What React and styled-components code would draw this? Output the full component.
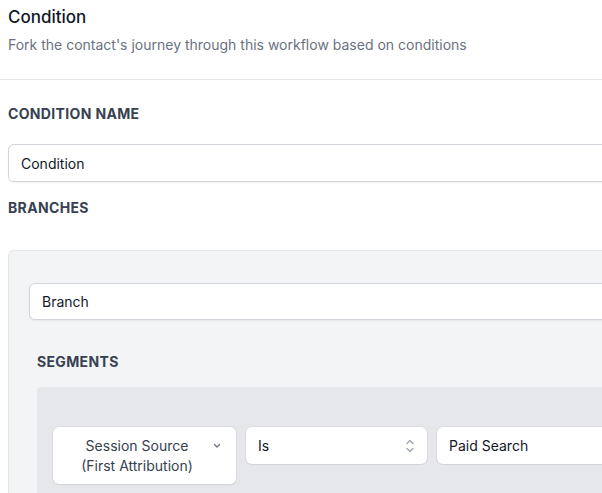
import React from 'react';
import styled, { createGlobalStyle } from 'styled-components';

const GlobalStyle = createGlobalStyle`
  html, body {
    margin: 0;
    padding: 0;
    background: #ffffff;
    overflow: hidden;
  }
  body {
    font-family: Inter, "Noto Sans", "Liberation Sans", sans-serif;
    color: #111827;
    -webkit-font-smoothing: antialiased;
  }
`;

const Page = styled.div`
  width: 760px;
`;

const Header = styled.header`
  padding: 4px 8px 24px;
  border-bottom: 1px solid #e5e7eb;
`;

const Title = styled.h2`
  margin: 0;
  font-size: 17px;
  line-height: 26px;
  font-weight: 500;
  color: #111827;
`;

const Subtitle = styled.p`
  margin: 5px 0 0;
  font-size: 14px;
  line-height: 20px;
  color: #6b7280;
`;

const Body = styled.div`
  padding: 24px 8px 0;
`;

const Label = styled.div`
  font-size: 14px;
  line-height: 20px;
  font-weight: 700;
  letter-spacing: 0.025em;
  color: #374151;
  text-transform: uppercase;
  margin-bottom: ${(p) => p.gap ?? 20}px;
`;

const TextInput = styled.input`
  display: block;
  box-sizing: border-box;
  width: 100%;
  height: ${(p) => p.h || 38}px;
  padding: 0 12px;
  border: 1px solid #d1d5db;
  border-radius: 6px;
  background: #ffffff;
  box-shadow: 0 1px 2px rgba(0, 0, 0, 0.05);
  font: inherit;
  font-size: 14px;
  color: #111827;
  outline: none;
`;

const Field = styled.div`
  margin-bottom: 16px;
`;

const Panel = styled.section`
  margin-top: 32px;
  padding: 32px 20px 0;
  background: #f3f4f6;
  border: 1px solid #e5e7eb;
  border-radius: 6px;
  height: 300px;
`;

const Segments = styled.div`
  padding: 32px 8px 0;
`;

const SegmentBox = styled.div`
  background: #e5e7eb;
  border-radius: 4px;
  padding: 40px 16px 16px;
  height: 200px;
`;

const Row = styled.div`
  display: flex;
  align-items: flex-start;
  gap: 10px;
`;

const Select = styled.div`
  box-sizing: border-box;
  flex: 0 0 ${(p) => p.w}px;
  display: flex;
  align-items: center;
  gap: 8px;
  min-height: 37px;
  padding: ${(p) => (p.tall ? '9px 15px 8px 16px' : '0 12px')};
  background: #ffffff;
  border-radius: 6px;
  box-shadow: 0 0 0 1px rgba(0, 0, 0, 0.04), 0 1px 2px rgba(0, 0, 0, 0.05);
  font-size: 14px;
  line-height: 20px;
  color: #111827;
`;

const SelectText = styled.span`
  flex: 1;
  text-align: ${(p) => (p.center ? 'center' : 'left')};
  color: ${(p) => (p.center ? '#374151' : '#111827')};
`;

const Caret = styled.svg`
  flex: 0 0 auto;
  align-self: ${(p) => (p.top ? 'flex-start' : 'center')};
  margin-top: ${(p) => (p.top ? '7px' : '0')};
  color: ${(p) => p.tone || '#6b7280'};
`;

function ChevronDown() {
  return (
    <Caret top width="8" height="6" viewBox="0 0 8 6" fill="none">
      <path d="M1.5 1.5L4 4L6.5 1.5" stroke="currentColor" strokeWidth="1.3" strokeLinecap="round" strokeLinejoin="round" />
    </Caret>
  );
}

function ChevronUpDown() {
  return (
    <Caret tone="#9ca3af" width="10" height="16" viewBox="0 0 10 16" fill="none">
      <path d="M2 5.5L5 2.5L8 5.5" stroke="currentColor" strokeWidth="1.3" strokeLinecap="round" strokeLinejoin="round" />
      <path d="M2 10.5L5 13.5L8 10.5" stroke="currentColor" strokeWidth="1.3" strokeLinecap="round" strokeLinejoin="round" />
    </Caret>
  );
}

export default function App() {
  return (
    <Page>
      <GlobalStyle />
      <Header>
        <Title>Condition</Title>
        <Subtitle>Fork the contact's journey through this workflow based on conditions</Subtitle>
      </Header>
      <Body>
        <Label>Condition Name</Label>
        <Field>
          <TextInput defaultValue="Condition" />
        </Field>
        <Label gap={0}>Branches</Label>
        <Panel>
          <TextInput h={37} defaultValue="Branch" />
          <Segments>
            <Label gap={15}>Segments</Label>
            <SegmentBox>
              <Row>
                <Select w={183} tall>
                  <SelectText center>Session Source (First Attribution)</SelectText>
                  <ChevronDown />
                </Select>
                <Select w={181}>
                  <SelectText>Is</SelectText>
                  <ChevronUpDown />
                </Select>
                <Select w={240}>
                  <SelectText>Paid Search</SelectText>
                </Select>
              </Row>
            </SegmentBox>
          </Segments>
        </Panel>
      </Body>
    </Page>
  );
}
